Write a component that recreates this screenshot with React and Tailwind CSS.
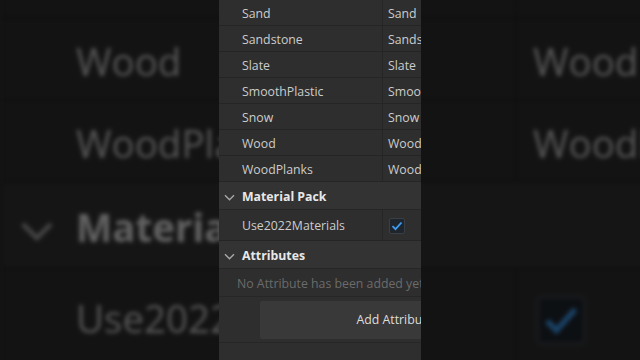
const MATERIALS = ["Sand", "Sandstone", "Slate", "SmoothPlastic", "Snow", "Wood", "WoodPlanks"];

function Chevron() {
  return (
    <svg width="11" height="7" viewBox="0 0 11 7" className="text-[#a8a8a8]">
      <path d="M1 1.2l4.5 4.5L10 1.2" fill="none" stroke="currentColor" strokeWidth="1.4" />
    </svg>
  );
}

function SectionHeader({ title }) {
  return (
    <div className="flex h-[28px] items-center border-b border-[#262626] bg-[#333333] pt-[3px]">
      <div className="flex w-[23px] justify-center pr-[3px]">
        <Chevron />
      </div>
      <span className="font-bold text-[#e8e8e8]">{title}</span>
    </div>
  );
}

function Row({ name, h = "h-[26px]", children }) {
  return (
    <div className={`flex ${h} border-b border-[#252525]`}>
      <div className="flex w-[164px] shrink-0 items-center border-r border-[#252525] pl-[23px] pt-[3px]">{name}</div>
      <div className="flex flex-1 items-center pl-[5px] pt-[3px]">{children ?? name}</div>
    </div>
  );
}

function Panel() {
  return (
    <div
      className="w-[320px] bg-[#2e2e2e] text-[12.3px] leading-none text-[#cccccc]"
      style={{ fontFamily: '"Open Sans", "Noto Sans", sans-serif' }}
    >
      {MATERIALS.map((m) => (
        <Row key={m} name={m} />
      ))}
      <SectionHeader title="Material Pack" />
      <Row name="Use2022Materials" h="h-[31px]">
        <div className="ml-[1px] flex h-[16px] w-[16px] -translate-y-[1px] items-center justify-center rounded-[2px] border border-[#3a3f46] bg-[#1f252d]">
          <svg width="12" height="10" viewBox="0 0 12 10">
            <path d="M1.5 5.2l3 3L10.5 1.5" fill="none" stroke="#3d9df2" strokeWidth="1.8" />
          </svg>
        </div>
      </Row>
      <SectionHeader title="Attributes" />
      <div className="flex h-[28px] items-center border-b border-[#262626] pl-[18px] pt-[3px] text-[#6b6b6b]">
        No Attribute has been added yet
      </div>
      <div className="flex h-[46px] items-center border-b border-[#262626] pl-[41px] pr-[9px]">
        <div className="flex h-[38px] flex-1 items-center justify-center rounded-[2px] bg-[#393939] pt-[2px] text-[#dddddd]">
          Add Attribute
        </div>
      </div>
      <div className="h-[40px]" />
    </div>
  );
}

export default function App() {
  return (
    <div className="relative h-[360px] w-[640px] overflow-hidden bg-[#131313]">
      {/* zoomed, blurred copy behind */}
      <div className="absolute left-[4px] top-[-387px] origin-top-left scale-[3.13] blur-[0.7px] brightness-[0.42]">
        <Panel />
      </div>
      <div className="relative ml-[219px] h-[360px] w-[202px] overflow-hidden bg-[#2e2e2e]">
        <Panel />
      </div>
    </div>
  );
}
